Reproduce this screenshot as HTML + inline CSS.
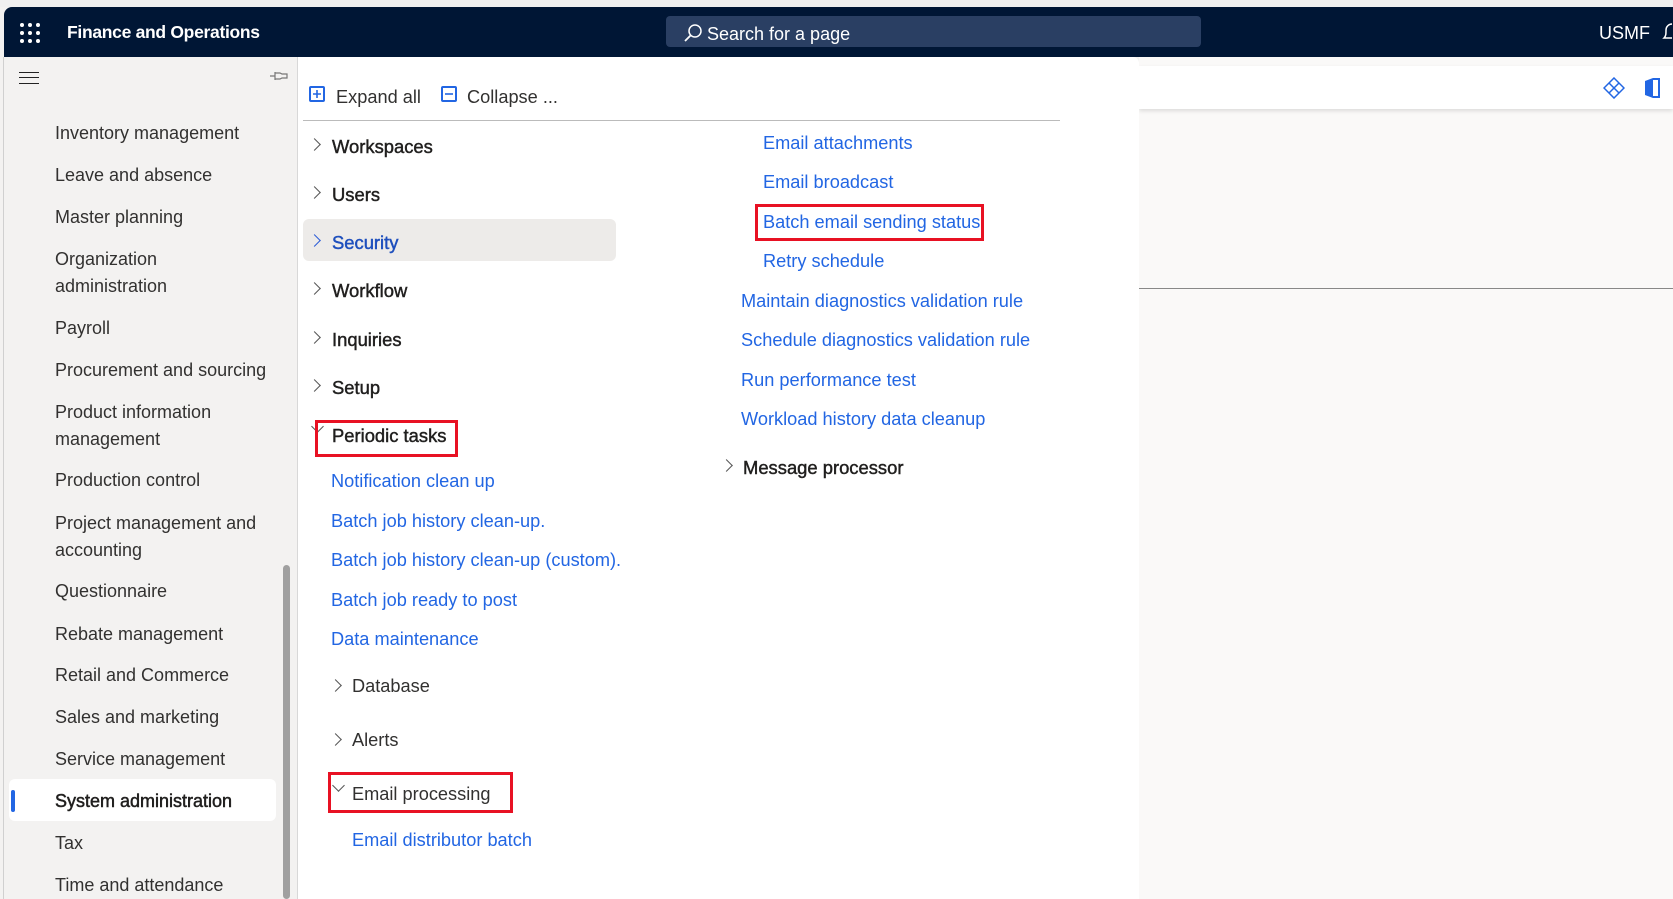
<!DOCTYPE html>
<html><head><meta charset="utf-8"><style>
*{margin:0;padding:0;box-sizing:border-box}
body{width:1673px;height:899px;overflow:hidden;background:#f3f2f1;font-family:"Liberation Sans",sans-serif;position:relative}
.a{position:absolute;white-space:nowrap}
.nav{font-size:18px;color:#323130;left:55px;line-height:27px}
.t{font-size:18.4px;color:#201f1e;left:332px;-webkit-text-stroke:0.45px #201f1e}
.l{font-size:18.2px;color:#2266e3}
.ch{position:absolute;width:9px;height:9px;border-right:1.3px solid #555;border-top:1.3px solid #555;transform:rotate(45deg)}
.cd{position:absolute;width:9px;height:9px;border-right:1.3px solid #555;border-bottom:1.3px solid #555;transform:rotate(45deg)}
.rb{position:absolute;border:3px solid #e81123}
</style></head><body>
<div class="a" style="left:0;top:0;width:1673px;height:7px;background:#f0f0f0"></div>
<div class="a" style="left:4px;top:7px;width:1669px;height:50px;background:#001635;border-radius:8px 0 0 0"></div>
<svg class="a" style="left:19px;top:22px" width="22" height="22"><g fill="#fff"><circle cx="3" cy="3" r="2"/><circle cx="11" cy="3" r="2"/><circle cx="19" cy="3" r="2"/><circle cx="3" cy="11" r="2"/><circle cx="11" cy="11" r="2"/><circle cx="19" cy="11" r="2"/><circle cx="3" cy="19" r="2"/><circle cx="11" cy="19" r="2"/><circle cx="19" cy="19" r="2"/></g></svg>
<div class="a" style="left:67px;top:22px;color:#fff;font-size:17.5px;font-weight:bold;letter-spacing:-0.3px">Finance and Operations</div>
<div class="a" style="left:666px;top:16px;width:535px;height:31px;background:#2a3f63;border-radius:4px"></div>
<svg class="a" style="left:683px;top:23px" width="20" height="20"><circle cx="12" cy="8" r="6" fill="none" stroke="#fff" stroke-width="1.5"/><line x1="8" y1="12" x2="2" y2="18" stroke="#fff" stroke-width="1.8"/></svg>
<div class="a" style="left:707px;top:24px;color:#fff;font-size:18px">Search for a page</div>
<div class="a" style="left:1599px;top:23px;color:#fff;font-size:18px">USMF</div>
<svg class="a" style="left:1662px;top:22px" width="11" height="20"><path d="M10 16H2c2-2 2-4 2-8a6 6 0 0 1 6-6" fill="none" stroke="#fff" stroke-width="1.5"/></svg>
<div class="a" style="left:3px;top:57px;width:1px;height:842px;background:#d0d0d0"></div>
<div class="a" style="left:19px;top:72px;width:20px;height:1.4px;background:#222"></div>
<div class="a" style="left:19px;top:77px;width:20px;height:1.4px;background:#222"></div>
<div class="a" style="left:19px;top:83px;width:20px;height:1.4px;background:#222"></div>
<svg class="a" style="left:269px;top:70px" width="20" height="12"><path d="M1 6h5M6 2v8M6 3h5l2 1h5v4h-5l-2 1H6" fill="none" stroke="#777" stroke-width="1.2"/></svg>
<div class="a nav" style="top:120px">Inventory management</div>
<div class="a nav" style="top:162px">Leave and absence</div>
<div class="a nav" style="top:204px">Master planning</div>
<div class="a nav" style="top:246px">Organization<br>administration</div>
<div class="a nav" style="top:315px">Payroll</div>
<div class="a nav" style="top:357px">Procurement and sourcing</div>
<div class="a nav" style="top:399px">Product information<br>management</div>
<div class="a nav" style="top:467px">Production control</div>
<div class="a nav" style="top:510px">Project management and<br>accounting</div>
<div class="a nav" style="top:578px">Questionnaire</div>
<div class="a nav" style="top:621px">Rebate management</div>
<div class="a nav" style="top:662px">Retail and Commerce</div>
<div class="a nav" style="top:704px">Sales and marketing</div>
<div class="a nav" style="top:746px">Service management</div>
<div class="a" style="left:9px;top:779px;width:267px;height:42px;background:#fff;border-radius:6px"></div>
<div class="a" style="left:11px;top:790px;width:4px;height:22px;background:#2266e3;border-radius:2px"></div>
<div class="a nav" style="top:788px;color:#201f1e;-webkit-text-stroke:0.5px #201f1e">System administration</div>
<div class="a nav" style="top:830px">Tax</div>
<div class="a nav" style="top:872px">Time and attendance</div>
<div class="a" style="left:283px;top:565px;width:7px;height:334px;background:#a0a0a0;border-radius:4px"></div>
<div class="a" style="left:297px;top:57px;width:1px;height:842px;background:#d8d8d8"></div>
<div class="a" style="left:1139px;top:57px;width:534px;height:842px;background:#faf9f8"></div>
<div class="a" style="left:1139px;top:66px;width:534px;height:43px;background:#fff;box-shadow:0 2px 4px rgba(0,0,0,.12)"></div>
<div class="a" style="left:1139px;top:288px;width:534px;height:1px;background:#888"></div>
<svg class="a" style="left:1603px;top:77px" width="22" height="22"><g fill="none" stroke="#2266e3" stroke-width="1.5"><path d="M11 1l10 10-10 10L1 11z"/><path d="M6 6l10 10M16 6L6 16"/></g></svg>
<svg class="a" style="left:1643px;top:77px" width="18" height="22"><path d="M2 4l8-3v20l-8-3z" fill="#2266e3"/><path d="M10 2h6v18h-6" fill="none" stroke="#2266e3" stroke-width="2"/></svg>
<div class="a" style="left:298px;top:57px;width:841px;height:842px;background:#fff;border-radius:0 6px 0 0"></div>
<svg class="a" style="left:309px;top:86px" width="16" height="16"><rect x="1" y="1" width="14" height="14" rx="1" fill="none" stroke="#2266e3" stroke-width="2"/><path d="M8 4v8M4 8h8" stroke="#2266e3" stroke-width="1.6"/></svg>
<div class="a" style="left:336px;top:87px;font-size:18.2px;color:#323130">Expand all</div>
<svg class="a" style="left:441px;top:86px" width="16" height="16"><rect x="1" y="1" width="14" height="14" rx="1" fill="none" stroke="#2266e3" stroke-width="2"/><path d="M4 8h8" stroke="#2266e3" stroke-width="1.6"/></svg>
<div class="a" style="left:467px;top:87px;font-size:18.2px;color:#323130">Collapse ...</div>
<div class="a" style="left:303px;top:120px;width:757px;height:1px;background:#bbb"></div>
<div class="a" style="left:303px;top:219px;width:313px;height:42px;background:#edebe9;border-radius:6px"></div>
<div class="ch" style="left:310px;top:140px"></div><div class="a t" style="top:136px">Workspaces</div>
<div class="ch" style="left:310px;top:188px"></div><div class="a t" style="top:184px">Users</div>
<div class="ch" style="left:310px;top:236px;border-color:#2a5bd7"></div><div class="a t" style="top:232px;color:#1e4fbd;-webkit-text-stroke-color:#1e4fbd">Security</div>
<div class="ch" style="left:310px;top:284px"></div><div class="a t" style="top:280px">Workflow</div>
<div class="ch" style="left:310px;top:333px"></div><div class="a t" style="top:329px">Inquiries</div>
<div class="ch" style="left:310px;top:381px"></div><div class="a t" style="top:377px">Setup</div>
<div class="cd" style="left:313px;top:422px"></div><div class="a t" style="top:425px">Periodic tasks</div>
<div class="rb" style="left:315px;top:420px;width:143px;height:37px"></div>
<div class="a l" style="left:331px;top:471px">Notification clean up</div>
<div class="a l" style="left:331px;top:511px">Batch job history clean-up.</div>
<div class="a l" style="left:331px;top:550px">Batch job history clean-up (custom).</div>
<div class="a l" style="left:331px;top:590px">Batch job ready to post</div>
<div class="a l" style="left:331px;top:629px">Data maintenance</div>
<div class="ch" style="left:331px;top:681px"></div><div class="a" style="left:352px;top:676px;font-size:18.2px;color:#323130">Database</div>
<div class="ch" style="left:331px;top:735px"></div><div class="a" style="left:352px;top:730px;font-size:18.2px;color:#323130">Alerts</div>
<div class="cd" style="left:334px;top:781px"></div><div class="a" style="left:352px;top:784px;font-size:18.2px;color:#323130">Email processing</div>
<div class="rb" style="left:328px;top:772px;width:185px;height:41px"></div>
<div class="a l" style="left:352px;top:830px">Email distributor batch</div>
<div class="a l" style="left:763px;top:133px">Email attachments</div>
<div class="a l" style="left:763px;top:172px">Email broadcast</div>
<div class="a l" style="left:763px;top:212px">Batch email sending status</div>
<div class="rb" style="left:755px;top:204px;width:229px;height:37px"></div>
<div class="a l" style="left:763px;top:251px">Retry schedule</div>
<div class="a l" style="left:741px;top:291px">Maintain diagnostics validation rule</div>
<div class="a l" style="left:741px;top:330px">Schedule diagnostics validation rule</div>
<div class="a l" style="left:741px;top:370px">Run performance test</div>
<div class="a l" style="left:741px;top:409px">Workload history data cleanup</div>
<div class="ch" style="left:722px;top:461px"></div><div class="a t" style="left:743px;top:457px">Message processor</div>
</body></html>
